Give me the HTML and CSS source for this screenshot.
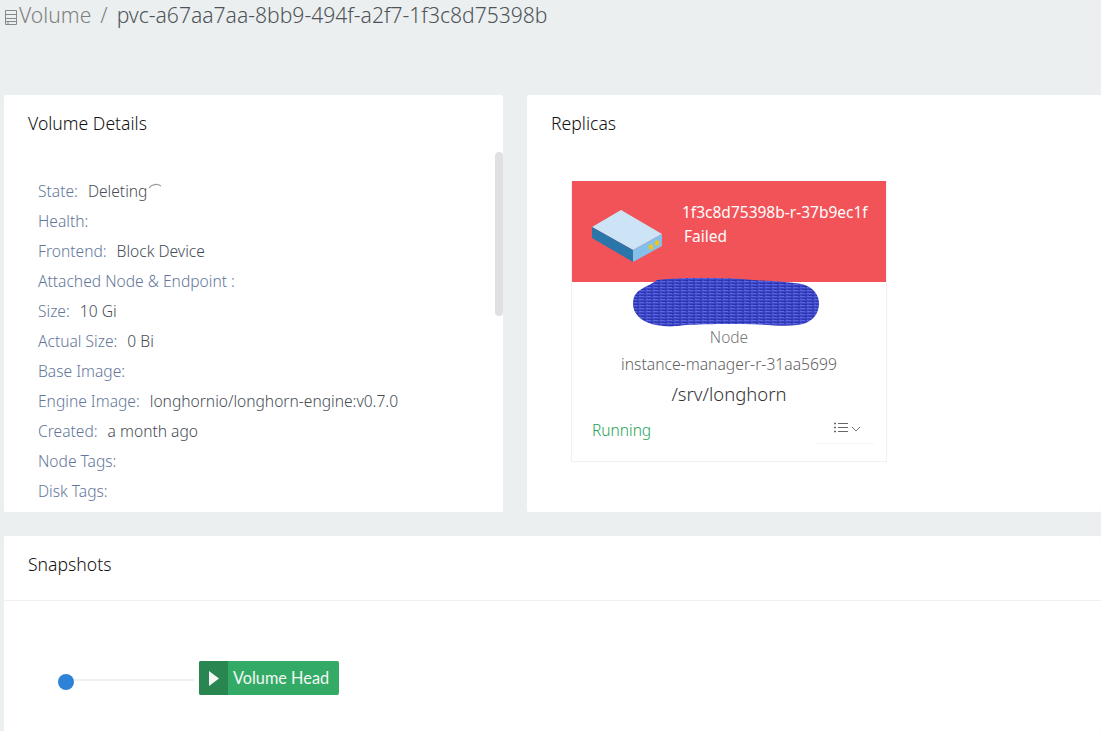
FILE: index.html
```html
<!DOCTYPE html>
<html lang="en">
<head>
<meta charset="utf-8">
<title>Volume</title>
<link rel="stylesheet" href="styles.css">
</head>
<body>
<div class="page">
  <header class="crumbs">
    <svg class="crumb-icon" viewBox="0 0 12 15" width="12" height="15"><path d="M.5 .5h11v14H.5zM.5 4.500h11M.5 8.500h11M.5 11.500h11M2 13h2" fill="none" stroke="#85898c" stroke-width="1"/></svg>
    <span class="crumb-root">Volume</span>
    <span class="crumb-sep">/</span>
    <span class="crumb-name">pvc-a67aa7aa-8bb9-494f-a2f7-1f3c8d75398b</span>
  </header>

  <div class="top-row">
    <section class="card details">
      <h2 class="card-title">Volume Details</h2>
      <div class="scrollbar"></div>
      <dl class="rows">
        <div class="row"><dt>State:</dt><dd>Deleting<svg class="spin" viewBox="0 0 14 6" width="14" height="6"><path d="M1 5C3.500 1 9.500 .5 13 3" fill="none" stroke="#9a9a9a" stroke-width="1.200"/></svg></dd></div>
        <div class="row"><dt>Health:</dt><dd></dd></div>
        <div class="row"><dt>Frontend:</dt><dd>Block Device</dd></div>
        <div class="row"><dt>Attached Node &amp; Endpoint :</dt><dd></dd></div>
        <div class="row"><dt>Size:</dt><dd>10 Gi</dd></div>
        <div class="row"><dt>Actual Size:</dt><dd>0 Bi</dd></div>
        <div class="row"><dt>Base Image:</dt><dd></dd></div>
        <div class="row"><dt>Engine Image:</dt><dd>longhornio/longhorn-engine:v0.7.0</dd></div>
        <div class="row"><dt>Created:</dt><dd>a month ago</dd></div>
        <div class="row"><dt>Node Tags:</dt><dd></dd></div>
        <div class="row"><dt>Disk Tags:</dt><dd></dd></div>
      </dl>
    </section>

    <section class="card replicas">
      <h2 class="card-title">Replicas</h2>
      <article class="replica">
        <div class="replica-head">
          <svg class="disk" viewBox="0 0 72 54" width="72" height="54">
            <path d="M1 18L30 1 71 25 42 41z" fill="#cce4f5"/>
            <path d="M1 18L42 41V53L1 29z" fill="#2a75a9"/>
            <path d="M42 41L71 25V37L42 53z" fill="#84c0ea"/>
            <ellipse cx="60" cy="38" rx="2.200" ry="2.800" fill="#f0c419"/>
            <ellipse cx="66" cy="34" rx="2.200" ry="2.800" fill="#f0c419"/>
          </svg>
          <div class="replica-text">
            <div class="replica-id">1f3c8d75398b-r-37b9ec1f</div>
            <div class="replica-state">Failed</div>
          </div>
        </div>
        <div class="replica-body">
          <svg class="scribble" viewBox="0 0 190 50" width="190" height="50">
            <defs>
              <pattern id="scrawl" width="7" height="3" patternUnits="userSpaceOnUse">
                <rect width="7" height="3" fill="#3c46c6"/>
                <path d="M0 .5h5" stroke="#5a66de" stroke-width="1"/>
                <path d="M2 2.500h5" stroke="#2a32ac" stroke-width="1"/>
              </pattern>
            </defs>
            <path d="M25 2C40 0 80-1 110 1 130 3 150 3 170 6 182 9 187 18 187 25 187 38 178 46 165 47 150 49 130 46 110 46 90 46 60 46 45 48 25 50 8 44 3 34-1 26 1 16 8 12 14 8 20 6 25 2z" fill="url(#scrawl)"/>
          </svg>
          <div class="node-label">Node</div>
          <div class="node-name">instance-manager-r-31aa5699</div>
          <div class="disk-path">/srv/longhorn</div>
          <div class="replica-foot">
            <span class="running">Running</span>
            <span class="menu">
              <svg viewBox="0 0 14 11" width="14" height="11"><path d="M4 1.500h10M4 5.500h10M4 9.500h10" stroke="#666" stroke-width="1"/><path d="M0 1.500h2M0 5.500h2M0 9.500h2" stroke="#666" stroke-width="1.400"/></svg>
              <svg class="menu-chevron" viewBox="0 0 10 6" width="10" height="6"><path d="M1 1l4 4 4-4" fill="none" stroke="#777" stroke-width="1"/></svg>
            </span>
          </div>
        </div>
      </article>
    </section>
  </div>

  <section class="card snapshots">
    <h2 class="card-title snap-title">Snapshots</h2>
    <div class="snap-tree">
      <span class="snap-dot"></span>
      <span class="snap-line"></span>
      <span class="snap-node">
        <span class="snap-play"><svg viewBox="0 0 10 15" width="10" height="15"><path d="M0 0l10 7.500L0 15z" fill="#f4f8f5"/></svg></span>
        <span class="snap-label">Volume Head</span>
      </span>
    </div>
  </section>
</div>
</body>
</html>
```
FILE: styles.css
```css
html, body { margin: 0; height: 100%; }
body {
  background: #ebeff0;
  font-family: "Noto Sans", "Open Sans", sans-serif;
  font-weight: 300;
  overflow: hidden;
}
.page { width: 1101px; height: 731px; padding-left: 4px; box-sizing: border-box; overflow: hidden; }

.crumbs { height: 95px; display: flex; align-items: flex-start; font-size: 21.100px; line-height: 30px; margin-left: 1px; }
.crumb-icon { margin-top: 10px; flex: none; }
.crumb-root { color: #7f7f7f; margin-left: 2px; }
.crumb-sep { color: #7f7f7f; margin: 0 9px; }
.crumb-name { color: #4f5458; }

.top-row { display: flex; gap: 24px; height: 417px; }
.card { background: #fff; border-radius: 2px; position: relative; }
.details { width: 499px; flex: none; }
.replicas { flex: 1; }
.card-title { margin: 0; font-size: 17.600px; font-weight: 300; color: #111; line-height: 24px; padding: 16px 24px 0; }

.scrollbar { position: absolute; right: 0; top: 57px; width: 8px; height: 164px; border-radius: 4px; background: #e0e0e0; }

.rows { margin: 0; padding: 41px 34px 0; }
.row { display: flex; height: 30px; align-items: center; font-size: 15.600px; }
.row dt { color: #64779a; }
.row dd { margin: 0 0 0 10px; color: #474d55; }
.spin { vertical-align: 8px; margin-left: 1px; }

.replica { width: 316px; margin: 46px 0 0 44px; border: 1px solid #f1f1f1; border-top: 0; box-sizing: border-box; height: 281px; }
.replica-head { background: #f25358; height: 101px; display: flex; align-items: flex-start; padding-left: 19px; }
.disk { flex: none; margin-top: 28px; }
.replica-text { color: #fff; font-size: 15.500px; margin: 19px 0 0 19px; font-weight: 400; }
.replica-id { line-height: 24px; }
.replica-state { line-height: 24px; margin-left: 2px; }

.replica-body { position: relative; text-align: center; padding-top: 45px; }
.scribble { position: absolute; left: 60px; top: -4px; }
.node-label { font-size: 15.500px; line-height: 20px; color: #777; }
.node-name { font-size: 15.700px; line-height: 20px; color: #5f5f5f; margin-top: 7px; }
.disk-path { font-size: 18.500px; line-height: 24px; color: #333; margin-top: 8px; }
.replica-foot { display: flex; justify-content: space-between; padding: 0 12px 0 20px; margin-top: 12px; height: 32px; align-items: flex-start; }
.running { color: #1ea355; font-size: 15.500px; line-height: 24px; }
.menu { display: flex; gap: 3px; align-items: center; width: 58px; box-sizing: border-box; height: 26px; padding: 0 0 6px 18px; border-bottom: 1px solid #f5f5f5; }
.menu-chevron { margin-top: 2px; }

.snapshots { margin-top: 24px; height: 195px; }
.snap-title { padding-bottom: 24px; border-bottom: 1px solid #f0f0f0; }
.snap-tree { display: flex; align-items: center; padding: 60px 0 0 54px; }
.snap-dot { width: 16px; height: 16px; border-radius: 50%; background: #2e83d9; margin-top: 7px; flex: none; }
.snap-line { width: 120px; height: 2px; background: #eef1f2; margin: 3px 5px 0 0; flex: none; }
.snap-node { display: flex; width: 140px; height: 34px; border-radius: 2px; background: #33ab66; color: #f4f8f5; overflow: hidden; flex: none; }
.snap-play { width: 29px; background: #2a8651; display: flex; align-items: center; padding-left: 10px; box-sizing: border-box; }
.snap-label { font-family: Lato, sans-serif; font-size: 16.300px; font-weight: 400; line-height: 33px; margin-left: 5px; }
```
